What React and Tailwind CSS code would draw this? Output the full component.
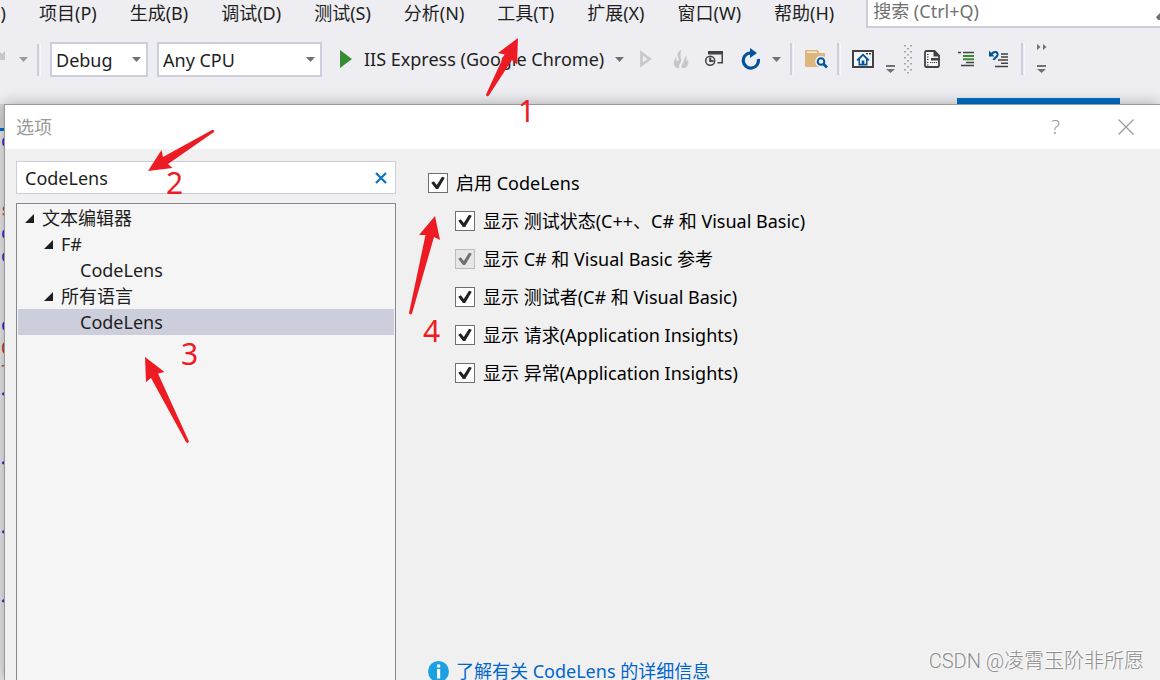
import React from "react";

const TEXT = "font-['Noto_Sans','Noto_Sans_CJK_SC',sans-serif]";

const menus = ["项目(P)", "生成(B)", "调试(D)", "测试(S)", "分析(N)", "工具(T)", "扩展(X)", "窗口(W)", "帮助(H)"];

const options = [
  { id: "status", label: "显示 测试状态(C++、C# 和 Visual Basic)" },
  { id: "refs", label: "显示 C# 和 Visual Basic 参考", disabled: true },
  { id: "authors", label: "显示 测试者(C# 和 Visual Basic)" },
  { id: "requests", label: "显示 请求(Application Insights)" },
  { id: "exceptions", label: "显示 异常(Application Insights)" },
];

const tree = [
  { label: "文本编辑器", indent: "pl-[7px]", open: true },
  { label: "F#", indent: "pl-[26px]", open: true },
  { label: "CodeLens", indent: "pl-[62px]" },
  { label: "所有语言", indent: "pl-[26px]", open: true },
  { label: "CodeLens", indent: "pl-[62px]", selected: true },
];

const codeLines = [
  ["c", "text-[#2a1fc8]"],
  ["'", "text-[#7a2fb0]"],
  ["", ""],
  ["s", "text-[#c03030]"],
  ["c", "text-[#2a1fc8]"],
  ["c", "text-[#2a1fc8]"],
  ["", ""],
  ["'", "text-[#7a2fb0]"],
  ["e", "text-[#2a1fc8]"],
  ["0", "text-[#b03020]"],
  ["T", "text-[#a06030]"],
  ["<", "text-[#2a1fc8]"],
  ["", ""],
  ["", ""],
  ["<", "text-[#2a1fc8]"],
  ["", ""],
  ["", ""],
  ["<", "text-[#2a1fc8]"],
  ["", ""],
  ["", ""],
  ["<", "text-[#2a1fc8]"],
  ["", ""],
  ["", ""],
  ["(", "text-[#404040]"],
];

function Caret({ className = "" }) {
  return (
    <svg width="9" height="5" viewBox="0 0 9 5" className={`shrink-0 ${className}`} aria-hidden="true">
      <path d="M0 0h9L4.5 5z" fill="currentColor" />
    </svg>
  );
}

function Separator({ className = "" }) {
  return <span className={`h-8 w-1 shrink-0 border-l-2 border-r border-l-[#cccedb] border-r-[#f8f8fa] ${className}`} />;
}

function Combo({ label, value, className }) {
  return (
    <div className={`grid shrink-0 items-center ${className}`}>
      <select
        aria-label={label}
        className="col-start-1 row-start-1 h-[35px] w-full appearance-none rounded-none border-2 border-[#cccedb] bg-white pl-1 text-lg leading-6 text-[#1e1e1e] outline-none"
      >
        <option>{value}</option>
      </select>
      <Caret className="pointer-events-none col-start-1 row-start-1 mr-[7px] justify-self-end text-[#717171]" />
    </div>
  );
}

function ToolButton({ label, className = "", children }) {
  return (
    <button type="button" aria-label={label} className={`flex h-8 shrink-0 items-center ${className}`}>
      {children}
    </button>
  );
}

function OverflowMark({ arrows }) {
  return (
    <svg width="10" height="30" viewBox="0 0 10 30" fill="#717171" aria-hidden="true">
      {arrows && <path d="M0 0l3.500 3L0 6zM6 0l3.500 3L6 6z" />}
      <path d="M0 21h9v2H0zM0 25h9l-4.500 4z" />
    </svg>
  );
}

function Toolbar() {
  return (
    <div className="flex items-start overflow-hidden">
      <div className="flex h-[35px] shrink-0 items-center">
        <svg width="5" height="22" viewBox="0 0 5 22" className="shrink-0" aria-hidden="true">
          <path d="M0 3l2 2 3-3v9H0z" fill="#c6c6c9" />
        </svg>
        <Caret className="ml-[14px] text-[#999ba0]" />
        <Separator className="ml-[9px]" />
        <Combo label="解决方案配置" value="Debug" className="ml-[9px] w-[98px]" />
        <Combo label="解决方案平台" value="Any CPU" className="ml-[9px] w-[165px]" />
      </div>
      <div className="flex h-[34px] shrink-0 items-center">
        <ToolButton label="启动" className="ml-[18px] text-lg leading-6 text-[#1e1e1e]">
          <svg width="12" height="18" viewBox="0 0 12 18" aria-hidden="true">
            <path d="M0 0l12 9-12 9z" fill="#388a34" />
          </svg>
          <span className="ml-3 whitespace-nowrap">IIS Express (Google Chrome)</span>
          <Caret className="ml-[11px] text-[#717171]" />
        </ToolButton>
        <ToolButton label="开始执行(不调试)" className="ml-4">
          <svg width="12" height="18" viewBox="0 0 12 18" aria-hidden="true">
            <path d="M1.500 3v12l8-6z" fill="none" stroke="#c9c9cd" strokeWidth="2.800" />
          </svg>
        </ToolButton>
        <ToolButton label="热重载" className="ml-[21px]">
          <svg width="16" height="18" viewBox="0 0 16 18" fill="#c6c6c9" aria-hidden="true">
            <path d="M8.500 0C4 2 4 5 5.500 8c.8 1.700.4 3-1 3C3.500 11 3 9.500 3.500 7 0 10 0 15 3.500 18h2.800C5.500 15 7.500 13.500 8.500 10.500 7.500 7 6.500 3.500 8.500 0z" />
            <path d="M13.500 5.500C12 8 11 8.500 10.700 11c-.4 2.500-3.200 4-1.700 7h3c3.500-2 4-5.500 2.700-8.500-.5 1-1 1.700-1.700 2 .3-2 .8-4 .5-6z" />
          </svg>
        </ToolButton>
        <ToolButton label="性能探查器" className="ml-4">
          <svg width="18" height="18" viewBox="0 0 18 18" aria-hidden="true">
            <path d="M3 1h15v12.500h-5.500v-1.500H16.500V4.500H3z" fill="#424242" />
            <circle cx="5.200" cy="10.800" r="4.500" fill="#eeeef2" stroke="#424242" strokeWidth="1.500" />
            <path d="M5.200 7.500V11H8.500" fill="none" stroke="#424242" strokeWidth="2" />
          </svg>
        </ToolButton>
        <ToolButton label="重启" className="ml-[18px]">
          <svg width="20" height="22" viewBox="0 0 20 22" aria-hidden="true">
            <path d="M17.300 11A7.600 7.600 0 1 1 9.500 4.900" fill="none" stroke="#00539c" strokeWidth="3.200" />
            <path d="M9 0l7 5-7 5z" fill="#00539c" />
          </svg>
          <Caret className="ml-[11px] text-[#717171]" />
        </ToolButton>
        <Separator className="ml-[9px]" />
        <ToolButton label="在文件中查找" className="ml-[11px]">
          <svg width="24" height="20" viewBox="0 0 24 20" aria-hidden="true">
            <path d="M0 2q0-1 1-1h12l1 3H19q1 0 1 1v13H1q-1 0-1-1z" fill="#dcb67a" />
            <path d="M2 4V2.500h9.500l.7 1.500z" fill="#f7eddc" />
            <circle cx="16" cy="12.500" r="3.600" fill="#eeeef2" stroke="#eeeef2" strokeWidth="4.500" />
            <path d="M18 15l4.500 4.500" stroke="#eeeef2" strokeWidth="5" />
            <circle cx="16" cy="12.500" r="3.300" fill="#eeeef2" stroke="#00539c" strokeWidth="2" />
            <path d="M18 14.500l4 4" stroke="#00539c" strokeWidth="2.600" />
          </svg>
        </ToolButton>
        <Separator className="ml-2" />
        <ToolButton label="主页" className="ml-[11px]">
          <svg width="22" height="18" viewBox="0 0 22 18" aria-hidden="true">
            <path d="M1 1h20v16H1z" fill="#f6f6f6" stroke="#424242" strokeWidth="2" />
            <path d="M14 3h2v1.500h-2zM17 3h2v1.500h-2z" fill="#424242" />
            <path d="M11 3.500l6.500 6.300-1.200 1.200-.8-.7V15.500h-9v-5.200l-.8.7-1.200-1.200z" fill="#00539c" />
            <path d="M11 6l3 3v4.800H12.300V10.500H9.700v3.300H8V9z" fill="#f6f6f6" />
          </svg>
        </ToolButton>
        <ToolButton label="工具栏选项" className="ml-3">
          <OverflowMark />
        </ToolButton>
        <svg width="9" height="29" viewBox="0 0 9 29" className="ml-2 shrink-0" aria-hidden="true">
          <defs>
            <pattern id="grip" width="6" height="6" patternUnits="userSpaceOnUse">
              <path d="M0 0h2v1.500H0zM3 3h2v1.500H3z" fill="#a5a5ab" />
            </pattern>
          </defs>
          <rect width="9" height="29" fill="url(#grip)" />
        </svg>
        <ToolButton label="文档大纲" className="ml-[11px]">
          <svg width="16" height="18" viewBox="0 0 16 18" aria-hidden="true">
            <path d="M2 1h8.500L15 5.500V16l-1 1H2l-1-1V2z" fill="#f6f6f6" stroke="#424242" strokeWidth="1.800" />
            <path d="M9.500 0v6.500H16z" fill="#424242" />
            <path d="M7 8h9v2.500H7z" fill="#424242" />
            <path d="M3 4.500h1.500M3 7h1.500M3 9.500h1.500M3 12.500h1.500M6 12.500h1.200M8 12.500h1.200M10 12.500h1.200M12 12.500h1.200M3 15h1.500" stroke="#424242" strokeWidth="1.200" />
          </svg>
        </ToolButton>
        <ToolButton label="注释选中行" className="ml-[18px]">
          <svg width="16" height="16" viewBox="0 0 16 16" aria-hidden="true">
            <path d="M0 1.500h3M5 1.500h11M8 11.500h8M3 14.500h13" stroke="#424242" strokeWidth="1.600" />
            <path d="M5 5h11M5 8.300h11" stroke="#388a34" strokeWidth="2" />
          </svg>
        </ToolButton>
        <ToolButton label="取消注释选中行" className="ml-[15px]">
          <svg width="20" height="18" viewBox="0 0 20 18" aria-hidden="true">
            <path d="M12 4h7M12 7h7M9 10h10M12 13.300h7M6 16.500h13" stroke="#424242" strokeWidth="1.600" />
            <path d="M2.500 4c3-3.500 6.500-2 6 1C8 7.500 5.500 7.500 4.500 10" fill="none" stroke="#00539c" strokeWidth="2" />
            <path d="M0 .5v6h5.500z" fill="#00539c" />
          </svg>
        </ToolButton>
        <Separator className="ml-3" />
        <ToolButton label="更多工具栏按钮" className="ml-3">
          <OverflowMark arrows />
        </ToolButton>
      </div>
    </div>
  );
}

function Check({ id, label, disabled }) {
  return (
    <div className="flex items-center gap-2">
      <span className="grid size-5 shrink-0">
        <input
          id={id}
          type="checkbox"
          defaultChecked
          disabled={disabled}
          className="peer col-start-1 row-start-1 size-5 appearance-none border border-[#707070] bg-white disabled:border-[#bcbcbc] disabled:bg-[#e6e6e6]"
        />
        <svg
          viewBox="0 0 20 20"
          className="pointer-events-none invisible col-start-1 row-start-1 size-5 text-[#212121] peer-checked:visible peer-disabled:text-[#707070]"
          aria-hidden="true"
        >
          <path d="M3.200 9.800L5.800 8.300l3 3.700L14 3.800l2.800 1L10.200 16H8z" fill="currentColor" />
        </svg>
      </span>
      <label htmlFor={id} className="whitespace-nowrap text-lg leading-5 text-black">
        {label}
      </label>
    </div>
  );
}

function Annotations() {
  return (
    <div className="pointer-events-none absolute inset-0 overflow-hidden text-3xl leading-8 text-[#ed1c24]">
      <svg width="620" height="460" viewBox="0 0 620 460" className="absolute left-0 top-0" fill="#ed1c24" aria-hidden="true">
        <path d="M518 38L498 53 504.500 54.500 486 94.500Q486 97 488.500 96L512 60 517 64.500z" />
        <path d="M148 171L161.500 150 163 157 212 130Q215 129.500 214 132L168 164 172.500 168z" />
        <path d="M145 357L164.500 372 158 373.500 189 441.500Q188 444 186 442L151 378 146 382z" />
        <path d="M435 216L419 235 425.500 235 409 313Q410 315.500 412 313.500L434 237 440 240z" />
      </svg>
      <span className="absolute left-[518px] top-[95px]">1</span>
      <span className="absolute left-[166px] top-[167px]">2</span>
      <span className="absolute left-[181px] top-[338px]">3</span>
      <span className="absolute left-[423px] top-[315px]">4</span>
    </div>
  );
}

export default function App() {
  return (
    <div className={`relative flex h-screen flex-col overflow-hidden bg-[#eeeef2] ${TEXT}`}>
      <header className="flex h-7 shrink-0">
        <nav className="flex shrink-0 gap-[33px] whitespace-nowrap text-lg leading-[26px] text-[#1e1e1e]">
          <a href="#git" className="flex w-1.5 justify-end overflow-hidden">
            (G)
          </a>
          {menus.map((m) => (
            <a key={m} href="#menu">
              {m}
            </a>
          ))}
        </nav>
        <div className="ml-8 flex min-w-0 flex-1 overflow-hidden border-b-2 border-l-2 border-[#cccedb] bg-white">
          <input
            aria-label="搜索"
            placeholder="搜索 (Ctrl+Q)"
            className="min-w-0 flex-1 pb-1 pl-[5px] text-lg leading-6 outline-none placeholder:text-[#717171]"
          />
          <svg width="4" height="26" viewBox="0 0 4 26" className="shrink-0" aria-hidden="true">
            <path d="M4 13L0 17l2 3h2z" fill="#717171" />
          </svg>
        </div>
      </header>

      <div className="shrink-0 pt-[14px]">
        <Toolbar />
      </div>
      <div className="mt-[21px] flex h-1.5 shrink-0 justify-end pr-10">
        <span className="w-[163px] bg-[#0072c6]" />
      </div>

      <main className="flex min-h-0 flex-1">
        <div className="w-1 shrink-0 overflow-hidden bg-[#e6e6e8]">
          <div className="h-6 bg-[#d6d6d9]" />
          <div className="h-[3px] bg-[#0072c6]" />
          <pre className="pl-px font-['Liberation_Mono',monospace] text-lg leading-[23px]">
            {codeLines.map(([text, color], i) => (
              <div key={i} className={`h-[23px] ${color}`}>
                {text}
              </div>
            ))}
          </pre>
        </div>

        <section
          aria-label="选项"
          className="flex min-w-0 flex-1 flex-col border-l border-t border-[#999999] bg-[#f0f0f0] shadow-[0_0_14px_rgba(0,0,0,0.3)]"
        >
          <div className="flex h-11 shrink-0 items-center bg-white pl-[11px] pr-[26px] text-[#999999]">
            <h1 className="flex-1 text-lg leading-6">选项</h1>
            <button type="button" aria-label="帮助" className="text-xl font-light leading-6">
              ?
            </button>
            <button type="button" aria-label="关闭" className="ml-[58px]">
              <svg width="16" height="16" viewBox="0 0 16 16" aria-hidden="true">
                <path d="M.5.5l15 15M15.500.5l-15 15" stroke="currentColor" strokeWidth="1.200" />
              </svg>
            </button>
          </div>

          <div className="flex min-h-0 flex-1 pl-[11px] pr-4 pt-3">
            <div className="flex w-[380px] shrink-0 flex-col">
              <div className="flex h-[33px] items-center border border-[#ccccdb] bg-white pl-2 pr-2">
                <input
                  aria-label="搜索选项"
                  defaultValue="CodeLens"
                  className="min-w-0 flex-1 text-lg leading-6 text-[#1e1e1e] outline-none"
                />
                <button type="button" aria-label="清除搜索">
                  <svg width="12" height="12" viewBox="0 0 12 12" aria-hidden="true">
                    <path d="M1 1l10 10M11 1L1 11" stroke="#0e70c0" strokeWidth="2.200" />
                  </svg>
                </button>
              </div>
              <ul role="tree" className="mt-[9px] flex-1 border border-b-0 border-[#828790] bg-[#f5f5f5] p-px">
                {tree.map((n, i) => (
                  <li
                    key={i}
                    role="treeitem"
                    aria-selected={!!n.selected}
                    className={`flex h-[26px] items-center text-lg leading-6 text-[#1e1e1e] ${n.indent} ${n.selected ? "bg-[#cccedb]" : ""}`}
                  >
                    {n.open && (
                      <svg width="9" height="9" viewBox="0 0 9 9" className="mr-2 shrink-0" aria-hidden="true">
                        <path d="M9 0v9H0z" fill="#1e1e1e" />
                      </svg>
                    )}
                    {n.label}
                  </li>
                ))}
              </ul>
            </div>

            <div className="flex flex-1 flex-col justify-between pl-8 pt-3">
              <div className="flex flex-col gap-[18px]">
                <Check id="enable" label="启用 CodeLens" />
                <div className="flex flex-col gap-[18px] pl-[27px]">
                  {options.map((o) => (
                    <Check key={o.id} {...o} />
                  ))}
                </div>
              </div>
              <div className="flex h-[38px] items-start justify-between">
                <a href="#learn" className="mt-5 flex h-[18px] items-center gap-[7px] text-lg leading-5 text-[#0066cc]">
                  <svg width="21" height="21" viewBox="0 0 21 21" className="shrink-0" aria-hidden="true">
                    <circle cx="10.500" cy="10.500" r="10.500" fill="#1ba1e2" />
                    <path d="M9 3.500h3.200v3H9zM9 8h3.200v9.500H9z" fill="#fff" />
                  </svg>
                  了解有关 CodeLens 的详细信息
                </a>
                <span className="mt-[7px] whitespace-nowrap font-['Roboto','Noto_Sans_CJK_SC',sans-serif] text-xl font-light leading-6 text-[#8c8c8c] [text-shadow:-1px_-1px_0_#ffffff]">
                  CSDN @凌霄玉阶非所愿
                </span>
              </div>
            </div>
          </div>
        </section>
      </main>
      <Annotations />
    </div>
  );
}
